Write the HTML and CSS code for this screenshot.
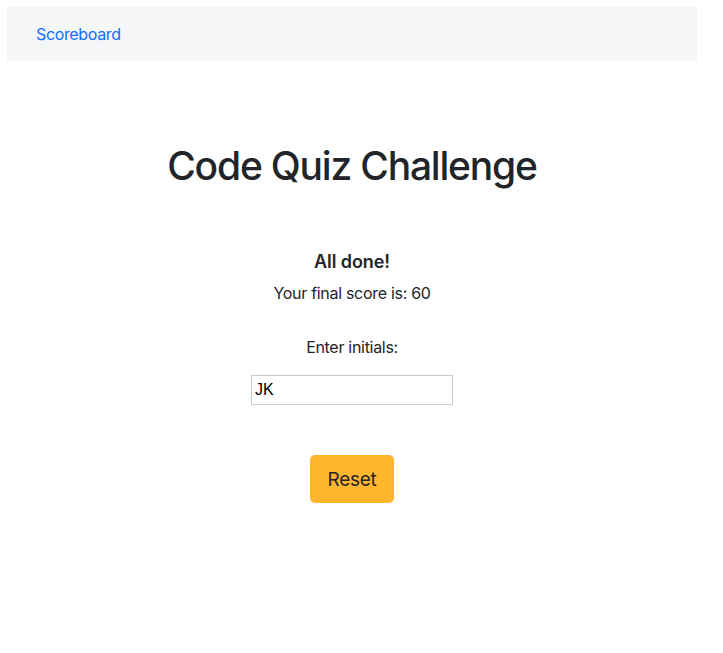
FILE: index.html
```html
<!DOCTYPE html>
<html lang="en">
<head>
<meta charset="utf-8">
<title>Code Quiz Challenge</title>
<link rel="stylesheet" href="styles.css">
</head>
<body>
  <div class="page">
    <nav class="navbar">
      <a class="nav-link" href="#">Scoreboard</a>
    </nav>
    <main class="quiz">
      <h1 class="title">Code Quiz Challenge</h1>
      <section class="result">
        <h2 class="done">All done!</h2>
        <p class="score">Your final score is: 60</p>
        <label class="initials-label" for="initials">Enter initials:</label>
        <input class="initials" id="initials" type="text" value="JK">
        <button class="btn-reset" type="button">Reset</button>
      </section>
    </main>
  </div>
</body>
</html>
```
FILE: styles.css
```css
* { box-sizing: border-box; }

html, body {
  margin: 0;
  background: #fff;
}

body {
  font-family: Inter, "Noto Sans", sans-serif;
  color: #212529;
  font-size: 16px;
  line-height: 1.5;
  letter-spacing: -0.3px;
}

.page {
  margin: 7px 26px 0 7px;
}

.navbar {
  background: #f5f6f8;
  height: 54px;
  display: flex;
  align-items: center;
  padding: 0 29px;
}

.nav-link {
  color: #0d6efd;
  text-decoration: none;
  font-size: 16px;
  letter-spacing: -0.35px;
}

.quiz {
  display: flex;
  flex-direction: column;
  align-items: center;
}

.title {
  margin: 82px 0 0;
  font-size: 39px;
  font-weight: 500;
  line-height: 1.2;
  letter-spacing: -1.2px;
}

.result {
  display: flex;
  flex-direction: column;
  align-items: center;
  margin-top: 61px;
}

.done {
  margin: 0;
  font-size: 18px;
  font-weight: 600;
  line-height: 1.2;
  letter-spacing: -0.1px;
}

.score {
  margin: 9px 0 0;
}

.initials-label {
  margin-top: 30px;
}

.initials {
  margin-top: 16px;
  width: 202px;
  height: 30px;
  border: 1px solid #c8c8c8;
  font-family: "Liberation Sans", Arial, sans-serif;
  font-size: 16px;
  letter-spacing: 0;
  padding: 0 3px;
  color: #000;
}

.btn-reset {
  margin-top: 50px;
  width: 84px;
  height: 48px;
  background: #ffb52c;
  border: none;
  border-radius: 5px;
  font-family: Inter, "Noto Sans", sans-serif;
  font-size: 19px;
  letter-spacing: -0.3px;
  color: #212529;
}
```
